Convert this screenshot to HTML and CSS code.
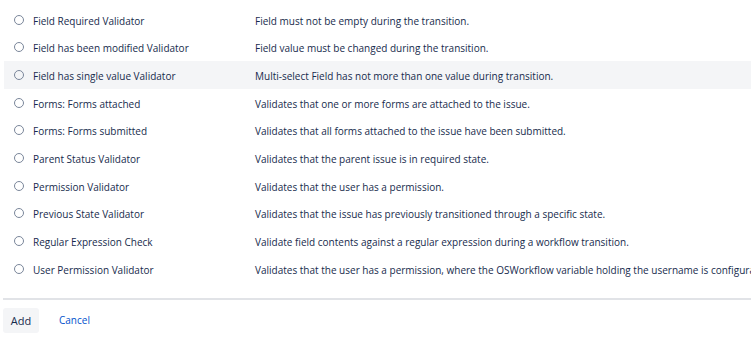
FILE: index.html
```html
<!DOCTYPE html>
<html lang="en">
<head>
    <meta charset="UTF-8">
    <title>Add Validator</title>
    <link rel="stylesheet" href="styles.css">
</head>
<body>
    <div class="validators">
        <label class="row"><span class="radio"></span><span class="name">Field Required Validator</span><span class="desc">Field must not be empty during the transition.</span></label>
        <label class="row"><span class="radio"></span><span class="name">Field has been modified Validator</span><span class="desc">Field value must be changed during the transition.</span></label>
        <label class="row hover"><span class="radio"></span><span class="name">Field has single value Validator</span><span class="desc">Multi-select Field has not more than one value during transition.</span></label>
        <label class="row"><span class="radio"></span><span class="name">Forms: Forms attached</span><span class="desc">Validates that one or more forms are attached to the issue.</span></label>
        <label class="row"><span class="radio"></span><span class="name">Forms: Forms submitted</span><span class="desc">Validates that all forms attached to the issue have been submitted.</span></label>
        <label class="row"><span class="radio"></span><span class="name">Parent Status Validator</span><span class="desc">Validates that the parent issue is in required state.</span></label>
        <label class="row"><span class="radio"></span><span class="name">Permission Validator</span><span class="desc">Validates that the user has a permission.</span></label>
        <label class="row"><span class="radio"></span><span class="name">Previous State Validator</span><span class="desc">Validates that the issue has previously transitioned through a specific state.</span></label>
        <label class="row"><span class="radio"></span><span class="name">Regular Expression Check</span><span class="desc">Validate field contents against a regular expression during a workflow transition.</span></label>
        <label class="row"><span class="radio"></span><span class="name">User Permission Validator</span><span class="desc">Validates that the user has a permission, where the OSWorkflow variable holding the username is configurable.</span></label>
    </div>
    <div class="buttons">
        <button class="add-button">Add</button>
        <a class="cancel" href="#">Cancel</a>
    </div>
</body>
</html>
```

FILE: styles.css
```css
body { margin: 0; overflow: hidden; font-family: "Open Sans", "Noto Sans", sans-serif; font-size: 10px; color: #172b4d; }
.validators { padding: 6px 0 0 4px; }
.row { display: flex; align-items: center; box-sizing: border-box; height: 27.67px; padding-top: 2px; white-space: nowrap; cursor: pointer; }
.row.hover { background: #f4f5f7; }
.radio { flex: none; width: 8px; height: 8px; border: 1.3px solid #7a869a; border-radius: 50%; margin: -2px 9px 0 10px; }
.name { flex: none; width: 222px; }
.desc { flex: none; }
.buttons { border-top: 2px solid #e1e3e7; margin: 15px 0 0 3px; padding-top: 8px; display: flex; align-items: center; }
.add-button { font: inherit; font-size: 11px; color: #172b4d; background: #f4f5f7; border: none; border-radius: 3px; height: 25px; width: 36px; padding: 0; cursor: pointer; }
.cancel { color: #0052cc; text-decoration: none; margin-left: 20px; font-size: 10px; }
```
